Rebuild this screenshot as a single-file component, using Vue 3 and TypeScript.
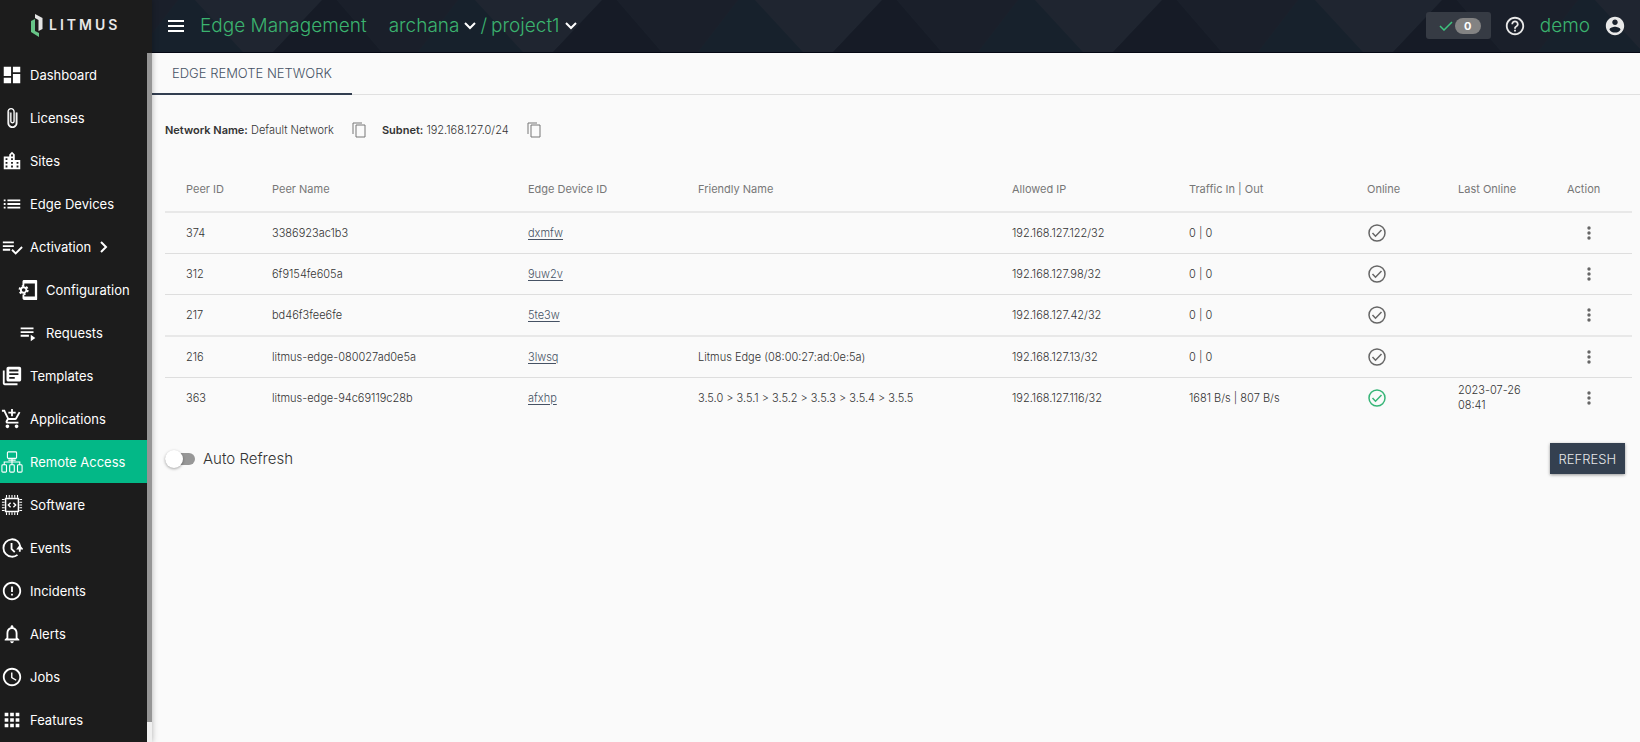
<script setup lang="ts">
import { ref } from 'vue'

interface Shape {
  d: string
  line?: number
  dash?: string
}
interface NavItem {
  label: string
  icon: Shape[]
  sub?: boolean
  active?: boolean
  expandable?: boolean
}
interface Peer {
  id: number
  name: string
  device: string
  friendly: string
  ip: string
  traffic: string
  online: boolean
  last: string
}

const ring =
  'M12 2C6.48 2 2 6.48 2 12s4.48 10 10 10 10-4.48 10-10S17.52 2 12 2zm0 18c-4.41 0-8-3.59-8-8s3.59-8 8-8 8 3.59 8 8-3.59 8-8 8z'

const navItems: NavItem[] = [
  { label: 'Dashboard', icon: [{ d: 'M3 13h8V3H3v10zm0 8h8v-6H3v6zm10 0h8V11h-8v10zm0-18v6h8V3h-8z' }] },
  {
    label: 'Licenses',
    icon: [
      {
        d: 'M16.5 6v11.5c0 2.21-1.79 4-4 4s-4-1.79-4-4V5c0-1.38 1.12-2.5 2.5-2.5s2.5 1.12 2.5 2.5v10.5c0 .55-.45 1-1 1s-1-.45-1-1V6H10v9.5c0 1.38 1.12 2.5 2.5 2.5s2.5-1.12 2.5-2.5V5c0-2.21-1.79-4-4-4S7 2.79 7 5v12.5c0 3.04 2.46 5.5 5.5 5.5s5.5-2.46 5.5-5.5V6h-1.5z',
      },
      { d: 'M16.5 6v11.5c0 2.21-1.79 4-4 4s-4-1.79-4-4V5', line: 1 },
    ],
  },
  {
    label: 'Sites',
    icon: [
      {
        d: 'M15 11V5l-3-3-3 3v2H3v14h18V11h-6zm-8 8H5v-2h2v2zm0-4H5v-2h2v2zm0-4H5V9h2v2zm6 8h-2v-2h2v2zm0-4h-2v-2h2v2zm0-4h-2V9h2v2zm0-4h-2V5h2v2zm6 12h-2v-2h2v2zm0-4h-2v-2h2v2z',
      },
    ],
  },
  {
    label: 'Edge Devices',
    icon: [{ d: 'M3 13h2v-2H3v2zm0 4h2v-2H3v2zm0-8h2V7H3v2zm4 4h14v-2H7v2zm0 4h14v-2H7v2zM7 7v2h14V7H7z' }],
  },
  {
    label: 'Activation',
    expandable: true,
    icon: [{ d: 'M2 10h12v2H2zm0-4h12v2H2zm0 8h8v2H2z' }, { d: 'M12 15l4 4 7-7', line: 2 }],
  },
  {
    label: 'Configuration',
    sub: true,
    icon: [
      { d: 'M7 1h14a1 1 0 0 1 1 1v20a1 1 0 0 1-1 1H8a2 2 0 0 1-2-2v-4h2v2h11.500V5H8v2H6V3a2 2 0 0 1 1-2z' },
      { d: 'M10.200 12a3 3 0 1 1-6 0 3 3 0 0 1 6 0z', line: 2 },
      { d: 'M11.700 12a4.500 4.500 0 1 1-9 0 4.500 4.500 0 0 1 9 0z', line: 2, dash: '2.356 2.356' },
    ],
  },
  { label: 'Requests', sub: true, icon: [{ d: 'M4 10h14v2H4zm0-4h14v2H4zm0 8h9v2H4zm11 0v7l5-3.5z' }] },
  {
    label: 'Templates',
    icon: [
      {
        d: 'M4 6H2v14c0 1.1.9 2 2 2h14v-2H4V6zm16-4H8c-1.1 0-2 .9-2 2v12c0 1.1.9 2 2 2h12c1.1 0 2-.9 2-2V4c0-1.1-.9-2-2-2zm-1 9H9V9h10v2zm-4 4H9v-2h6v2zm4-8H9V5h10v2z',
      },
    ],
  },
  {
    label: 'Applications',
    icon: [
      {
        d: 'M11 9h2V6h3V4h-3V1h-2v3H8v2h3v3zm-4 9c-1.1 0-1.99.9-1.99 2S5.9 22 7 22s2-.9 2-2-.9-2-2-2zm10 0c-1.1 0-1.99.9-1.99 2s.89 2 1.99 2 2-.9 2-2-.9-2-2-2zm-9.83-3.25l.03-.12.9-1.63h7.45c.75 0 1.41-.41 1.75-1.03l3.86-7.01L19.42 4h-.01l-1.1 2-2.76 5H8.53l-.13-.27L6.16 6l-.95-2-.94-2H1v2h2l3.6 7.59-1.35 2.45c-.16.28-.25.61-.25.96 0 1.1.9 2 2 2h12v-2H7.42c-.13 0-.25-.11-.25-.25z',
      },
    ],
  },
  {
    label: 'Remote Access',
    active: true,
    icon: [
      {
        d: 'M8 1h8a1 1 0 0 1 1 1v5a1 1 0 0 1-1 1H8a1 1 0 0 1-1-1V2a1 1 0 0 1 1-1zM12 8v7M8 10h8M3.500 15v-3h17v3M2 15h3a1 1 0 0 1 1 1v6a1 1 0 0 1-1 1H2a1 1 0 0 1-1-1v-6a1 1 0 0 1 1-1zM10.500 15h3a1 1 0 0 1 1 1v6a1 1 0 0 1-1 1h-3a1 1 0 0 1-1-1v-6a1 1 0 0 1 1-1zM19 15h3a1 1 0 0 1 1 1v6a1 1 0 0 1-1 1h-3a1 1 0 0 1-1-1v-6a1 1 0 0 1 1-1z',
        line: 1.2,
      },
    ],
  },
  {
    label: 'Software',
    icon: [
      { d: 'M5 5h14v14H5z', line: 1.6 },
      { d: 'M10.500 9.500L8 12l2.500 2.500M13.500 9.500L16 12l-2.500 2.500', line: 1.5 },
      {
        d: 'M6 1v3M9 1v3M12 1v3M15 1v3M18 1v3M6 20v3M9 20v3M12 20v3M15 20v3M18 20v3M1 6h3M1 9h3M1 12h3M1 15h3M1 18h3M20 6h3M20 9h3M20 12h3M20 15h3M20 18h3',
        line: 1.2,
      },
    ],
  },
  {
    label: 'Events',
    icon: [
      { d: 'M18 19.500A9.500 9.500 0 1 1 18 4.500A9.500 9.500 0 0 1 20.800 10', line: 2 },
      { d: 'M11.500 6.500V13l3.500 3.500', line: 2 },
      { d: 'M16.500 13.500l4-5 4 5zM19.500 13h2v3h-2z' },
    ],
  },
  { label: 'Incidents', icon: [{ d: ring }, { d: 'M11 15h2v2h-2zm0-8h2v6h-2z' }] },
  {
    label: 'Alerts',
    icon: [
      {
        d: 'M12 22c1.100 0 2-.9 2-2h-4c0 1.100.89 2 2 2zm6-6v-5c0-3.070-1.640-5.640-4.500-6.320V4c0-.83-.67-1.500-1.500-1.500s-1.500.67-1.500 1.500v.68C7.630 5.360 6 7.920 6 11v5l-2 2v1h16v-1l-2-2zm-2 1H8v-6c0-2.480 1.510-4.500 4-4.500s4 2.020 4 4.500v6z',
      },
    ],
  },
  { label: 'Jobs', icon: [{ d: ring }, { d: 'M12.500 7H11v6l5.250 3.150.75-1.230-4.500-2.670z' }] },
  {
    label: 'Features',
    icon: [
      {
        d: 'M4 8h4V4H4v4zm6 12h4v-4h-4v4zm-6 0h4v-4H4v4zm0-6h4v-4H4v4zm6 0h4v-4h-4v4zm6-10v4h4V4h-4zm-6 4h4V4h-4v4zm6 6h4v-4h-4v4zm0 6h4v-4h-4v4z',
      },
    ],
  },
]

const columns = [
  { label: 'Peer ID', cls: 'c-id' },
  { label: 'Peer Name', cls: 'c-name' },
  { label: 'Edge Device ID', cls: 'c-device' },
  { label: 'Friendly Name', cls: 'c-friendly' },
  { label: 'Allowed IP', cls: 'c-ip' },
  { label: 'Traffic In | Out', cls: 'c-traffic' },
  { label: 'Online', cls: 'c-online' },
  { label: 'Last Online', cls: 'c-last' },
  { label: 'Action', cls: 'c-action' },
]

const peers: Peer[] = [
  { id: 374, name: '3386923ac1b3', device: 'dxmfw', friendly: '', ip: '192.168.127.122/32', traffic: '0 | 0', online: false, last: '' },
  { id: 312, name: '6f9154fe605a', device: '9uw2v', friendly: '', ip: '192.168.127.98/32', traffic: '0 | 0', online: false, last: '' },
  { id: 217, name: 'bd46f3fee6fe', device: '5te3w', friendly: '', ip: '192.168.127.42/32', traffic: '0 | 0', online: false, last: '' },
  { id: 216, name: 'litmus-edge-080027ad0e5a', device: '3lwsq', friendly: 'Litmus Edge (08:00:27:ad:0e:5a)', ip: '192.168.127.13/32', traffic: '0 | 0', online: false, last: '' },
  { id: 363, name: 'litmus-edge-94c69119c28b', device: 'afxhp', friendly: '3.5.0 > 3.5.1 > 3.5.2 > 3.5.3 > 3.5.4 > 3.5.5', ip: '192.168.127.116/32', traffic: '1681 B/s | 807 B/s', online: true, last: '2023-07-26 08:41' },
]

const autoRefresh = ref(false)
</script>

<template>
  <div class="app">
    <aside class="sidebar">
      <a class="logo" href="#" aria-label="Litmus home">
        <svg class="logo-mark" viewBox="0 0 12 24" aria-hidden="true">
          <path fill="#67c587" d="M0 8l4-2v12l4 2v4L0 19z" />
          <path fill="#e4e4e4" d="M4 1l7.500 4v11l-4 2V7L4 5z" />
        </svg>
        <span class="logo-text">LITMUS</span>
      </a>
      <div class="menu">
        <nav class="nav">
          <a
            v-for="item in navItems"
            :key="item.label"
            href="#"
            class="nav-item"
            :class="{ sub: item.sub, active: item.active }"
          >
            <svg class="nav-icon" viewBox="0 0 24 24" aria-hidden="true">
              <path
                v-for="(s, i) in item.icon"
                :key="i"
                :d="s.d"
                :fill="s.line ? 'none' : 'currentColor'"
                :stroke="s.line ? 'currentColor' : 'none'"
                :stroke-width="s.line"
                :stroke-dasharray="s.dash"
              />
            </svg>
            <span>{{ item.label }}</span>
            <svg v-if="item.expandable" class="nav-arrow" viewBox="0 0 10 12" aria-hidden="true">
              <path d="M2 1l5 5-5 5" fill="none" stroke="currentColor" stroke-width="2" />
            </svg>
          </a>
        </nav>
        <div class="scroll-track"><div class="scroll-thumb"></div></div>
      </div>
    </aside>

    <div class="page">
      <header class="topbar">
        <svg class="topbar-art" width="100%" height="100%" aria-hidden="true">
          <defs>
            <pattern id="facets" x="43" y="0" width="280" height="52" patternUnits="userSpaceOnUse">
              <rect width="280" height="52" fill="#17212c" />
              <path fill="#1f2530" d="M0 0h127L78 52H48z" />
              <path fill="#161b26" d="M127 0h15l45 52H78z" />
              <path fill="#1a1f2a" d="M142 0h121l-40 52h-36z" />
            </pattern>
          </defs>
          <rect width="100%" height="100%" fill="url(#facets)" />
        </svg>
        <div class="topbar-row">
          <button class="plain burger" type="button" aria-label="Toggle menu">
            <svg viewBox="0 0 16 12" aria-hidden="true">
              <path d="M0 1h16M0 6h16M0 11h16" stroke="currentColor" stroke-width="2" />
            </svg>
          </button>
          <span class="product">Edge Management</span>
          <button class="plain crumb" type="button">
            archana
            <svg viewBox="0 0 12 8" aria-hidden="true"><path d="M1 1l5 5 5-5" fill="none" stroke="#fff" stroke-width="2" /></svg>
          </button>
          <span class="slash">/</span>
          <button class="plain crumb" type="button">
            project1
            <svg viewBox="0 0 12 8" aria-hidden="true"><path d="M1 1l5 5 5-5" fill="none" stroke="#fff" stroke-width="2" /></svg>
          </button>
          <button class="plain status" type="button">
            <svg viewBox="0 0 14 10" aria-hidden="true"><path d="M1 5l4 4 8-8" fill="none" stroke="#3dc47e" stroke-width="1.500" /></svg>
            <span class="count">0</span>
          </button>
          <button class="plain round" type="button" aria-label="Help">
            <svg viewBox="0 0 24 24" aria-hidden="true">
              <path fill="currentColor" :d="ring" />
              <path fill="currentColor" d="M11 18h2v-2h-2v2zm1-12c-2.210 0-4 1.790-4 4h2c0-1.100.9-2 2-2s2 .9 2 2c0 2-3 1.750-3 5h2c0-2.250 3-2.500 3-5 0-2.210-1.790-4-4-4z" />
            </svg>
          </button>
          <span class="user">demo</span>
          <button class="plain round" type="button" aria-label="Account">
            <svg viewBox="0 0 24 24" aria-hidden="true">
              <path fill="currentColor" d="M12 2C6.480 2 2 6.480 2 12s4.480 10 10 10 10-4.480 10-10S17.520 2 12 2zm0 3c1.660 0 3 1.340 3 3s-1.340 3-3 3-3-1.340-3-3 1.340-3 3-3zm0 14.200c-2.500 0-4.710-1.280-6-3.220.03-1.990 4-3.080 6-3.080 1.990 0 5.970 1.090 6 3.080-1.290 1.940-3.500 3.220-6 3.220z" />
            </svg>
          </button>
        </div>
      </header>

      <div class="tabs" role="tablist">
        <button class="plain tab" type="button" role="tab" aria-selected="true">EDGE REMOTE NETWORK</button>
      </div>

      <main class="content">
        <div class="network">
          <span><b>Network Name:</b> Default Network</span>
          <button class="plain copy" type="button" aria-label="Copy network name">
            <svg viewBox="0 0 14 16" aria-hidden="true"><path d="M1 12V1h9M4 3h9v12H4z" fill="none" stroke="currentColor" /></svg>
          </button>
          <span><b>Subnet:</b> 192.168.127.0/24</span>
          <button class="plain copy" type="button" aria-label="Copy subnet">
            <svg viewBox="0 0 14 16" aria-hidden="true"><path d="M1 12V1h9M4 3h9v12H4z" fill="none" stroke="currentColor" /></svg>
          </button>
        </div>

        <table class="peers">
          <colgroup>
            <col v-for="c in columns" :key="c.cls" :class="c.cls" />
          </colgroup>
          <thead>
            <tr>
              <th v-for="c in columns" :key="c.cls" scope="col">{{ c.label }}</th>
            </tr>
          </thead>
          <tbody>
            <tr v-for="p in peers" :key="p.id">
              <td>{{ p.id }}</td>
              <td>{{ p.name }}</td>
              <td><a class="device" href="#">{{ p.device }}</a></td>
              <td>{{ p.friendly }}</td>
              <td>{{ p.ip }}</td>
              <td>{{ p.traffic }}</td>
              <td>
                <svg class="state" :class="{ on: p.online }" viewBox="0 0 18 18" role="img" :aria-label="p.online ? 'Online' : 'Offline'">
                  <circle cx="9" cy="9" r="8" />
                  <path d="M4.500 9l3 3.200 6-6.200" />
                </svg>
              </td>
              <td class="last">{{ p.last }}</td>
              <td>
                <button class="plain more" type="button" aria-label="Row actions">
                  <svg viewBox="0 0 4 14" aria-hidden="true">
                    <circle cx="2" cy="2" r="1.700" /><circle cx="2" cy="7" r="1.700" /><circle cx="2" cy="12" r="1.700" />
                  </svg>
                </button>
              </td>
            </tr>
          </tbody>
        </table>

        <div class="footer">
          <label class="switch">
            <input v-model="autoRefresh" type="checkbox" />
            <span>Auto Refresh</span>
          </label>
          <button class="refresh" type="button">REFRESH</button>
        </div>
      </main>
    </div>
  </div>
</template>

<style>
body {
  margin: 0;
  background: #fafafa;
}
</style>

<style scoped>
.app {
  display: flex;
  min-height: 100vh;
  font-family: Inter, 'Open Sans', sans-serif;
  font-size: 11px;
  font-weight: 300;
  color: #333;
  background: #fafafa;
}
svg {
  display: block;
}
.plain {
  padding: 0;
  border: 0;
  background: none;
  color: inherit;
  font: inherit;
  cursor: pointer;
}

.sidebar {
  flex: 0 0 152px;
  display: flex;
  flex-direction: column;
  background: #1c1c1c;
  color: #fff;
  z-index: 1;
  box-shadow: 0 0 6px rgba(0, 0, 0, 0.3);
}
.logo {
  box-sizing: border-box;
  height: 53px;
  padding: 13px 0 0 31px;
  display: flex;
  gap: 6px;
  color: #e8e8e8;
  text-decoration: none;
}
.logo-mark {
  width: 12px;
  height: 24px;
}
.logo-text {
  font-size: 14px;
  line-height: 24px;
  font-weight: 600;
  letter-spacing: 3px;
}
.menu {
  flex: 1;
  display: flex;
}
.nav {
  flex: 1;
}
.nav-item {
  display: flex;
  align-items: center;
  height: 43px;
  padding-left: 1px;
  color: #fff;
  font-size: 13px;
  font-weight: 400;
  text-decoration: none;
  white-space: nowrap;
}
.nav-item.sub {
  padding-left: 17px;
}
.nav-item.active {
  background: #03b887;
}
.nav-icon {
  width: 22px;
  height: 22px;
  margin-right: 7px;
}
.nav-arrow {
  width: 10px;
  height: 12px;
  margin-left: 8px;
}
.scroll-track {
  width: 5px;
  display: flex;
  background: #f0f0f0;
}
.scroll-thumb {
  flex: 1;
  margin-bottom: 20px;
  background: #959595;
}

.page {
  flex: 1;
  min-width: 0;
}
.topbar {
  position: relative;
  height: 52px;
  border-bottom: 1px solid #050814;
}
.topbar-art {
  position: absolute;
  inset: 0;
}
.topbar-row {
  position: relative;
  display: flex;
  align-items: center;
  height: 51px;
  padding: 0 14px 0 16px;
  color: #3bb36f;
  font-size: 19px;
  white-space: nowrap;
}
.burger {
  width: 16px;
  margin-right: 16px;
  color: #fff;
}
.product {
  margin-right: 22px;
}
.crumb {
  display: flex;
  align-items: center;
  gap: 5px;
}
.crumb svg {
  width: 12px;
  height: 8px;
}
.slash {
  margin: 0 4px;
}
.status {
  display: flex;
  align-items: center;
  gap: 2px;
  height: 27px;
  margin-left: auto;
  margin-right: 13px;
  padding: 0 10px 0 13px;
  border-radius: 3px;
  background: #363b44;
}
.status svg {
  width: 14px;
  height: 10px;
}
.count {
  width: 26px;
  border-radius: 8px;
  background: #838383;
  color: #fff;
  font-size: 11px;
  line-height: 16px;
  font-weight: 700;
  text-align: center;
}
.round {
  color: #e8e8e8;
}
.round svg {
  width: 22px;
  height: 22px;
}
.user {
  margin: 0 14px;
}

.tabs {
  display: flex;
  height: 42px;
  box-shadow: inset 0 -1px #e0e0e0;
}
.tab {
  padding: 0 20px;
  border-bottom: 2px solid #323e50;
  color: #465264;
  font-size: 13px;
}

.content {
  padding: 23px 8px 0 13px;
}
.network {
  display: flex;
  align-items: center;
  height: 23px;
}
.network span {
  font-size: 11px;
}
.network b {
  font-weight: 600;
}
.copy {
  margin: 0 16px 0 18px;
  color: #777;
}
.copy svg {
  width: 14px;
  height: 16px;
}

.peers {
  width: 100%;
  margin-top: 24px;
  border-collapse: separate;
  border-spacing: 0;
  table-layout: fixed;
}
.c-id { width: 107px; }
.c-name { width: 256px; }
.c-device { width: 170px; }
.c-friendly { width: 314px; }
.c-ip { width: 177px; }
.c-traffic { width: 178px; }
.c-online { width: 91px; }
.c-last { width: 109px; }
.c-action { width: 65px; }
.peers th,
.peers td {
  box-sizing: border-box;
  height: 41px;
  padding: 0;
  border-bottom: 1px solid #dedede;
  text-align: left;
  line-height: 15px;
}
.peers th {
  height: 48px;
  padding-top: 2px;
  border-bottom: 2px solid #e8e8e8;
  color: #777;
  font-weight: 400;
}
.peers tr > :first-child {
  padding-left: 21px;
}
.peers tbody tr:nth-child(3) td {
  height: 42px;
  border-bottom: 2px solid #e8e8e8;
}
.peers tbody tr:last-child td {
  border-bottom-color: transparent;
}
.device {
  color: #465264;
  text-underline-offset: 2px;
}
.peers .last {
  padding-right: 40px;
}
.state {
  width: 18px;
  height: 18px;
  margin-left: 1px;
  fill: none;
  stroke: #666;
  stroke-width: 1.5;
}
.state.on {
  stroke: #36b577;
}
.more {
  display: block;
  margin-left: 20px;
}
.more svg {
  width: 4px;
  height: 14px;
  fill: #666;
}

.footer {
  display: flex;
  align-items: center;
  justify-content: space-between;
  margin-top: 24px;
  padding-right: 7px;
}
.switch {
  display: flex;
  align-items: center;
  gap: 8px;
  font-size: 15px;
}
.switch input {
  position: relative;
  appearance: none;
  width: 30px;
  height: 12px;
  margin: 0;
  border-radius: 6px;
  background: #979797;
}
.switch input::before {
  content: '';
  position: absolute;
  top: -3px;
  left: 0;
  width: 18px;
  height: 18px;
  border-radius: 50%;
  background: #fff;
  box-shadow: 0 1px 3px rgba(0, 0, 0, 0.35);
}
.switch input:checked::before {
  left: 12px;
}
.refresh {
  height: 31px;
  padding: 0 9px;
  border: 0;
  background: #344050;
  color: #e6e8ea;
  font: inherit;
  font-size: 13px;
  box-shadow: 0 1px 3px rgba(0, 0, 0, 0.4);
}
</style>
